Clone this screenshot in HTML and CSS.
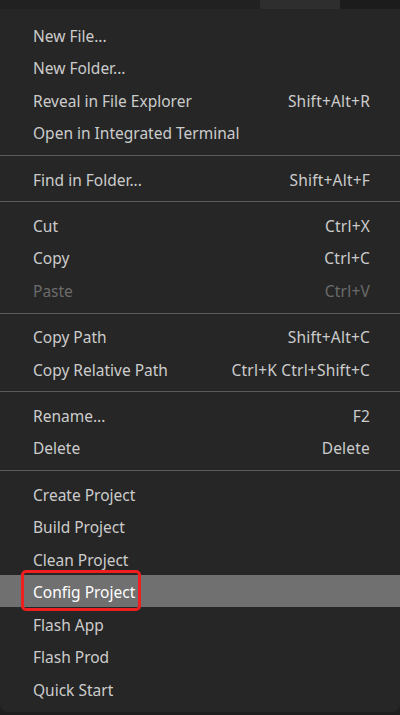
FILE: index.html
```html
<!DOCTYPE html>
<html>
<head>
<meta charset="utf-8">
<link rel="stylesheet" href="styles.css">
</head>
<body>
<div class="topbar">
  <div class="seg seg-left"></div>
  <div class="seg seg-mid"></div>
  <div class="seg seg-right"></div>
</div>
<div class="menu">
  <div class="item"><span class="label">New File...</span></div>
  <div class="item"><span class="label">New Folder...</span></div>
  <div class="item"><span class="label">Reveal in File Explorer</span><span class="key">Shift+Alt+R</span></div>
  <div class="item"><span class="label">Open in Integrated Terminal</span></div>
  <div class="sep"></div>
  <div class="item"><span class="label">Find in Folder...</span><span class="key">Shift+Alt+F</span></div>
  <div class="sep"></div>
  <div class="item"><span class="label">Cut</span><span class="key">Ctrl+X</span></div>
  <div class="item"><span class="label">Copy</span><span class="key">Ctrl+C</span></div>
  <div class="item disabled"><span class="label">Paste</span><span class="key">Ctrl+V</span></div>
  <div class="sep"></div>
  <div class="item"><span class="label">Copy Path</span><span class="key">Shift+Alt+C</span></div>
  <div class="item"><span class="label">Copy Relative Path</span><span class="key">Ctrl+K Ctrl+Shift+C</span></div>
  <div class="sep"></div>
  <div class="item"><span class="label">Rename...</span><span class="key">F2</span></div>
  <div class="item"><span class="label">Delete</span><span class="key">Delete</span></div>
  <div class="sep"></div>
  <div class="item"><span class="label">Create Project</span></div>
  <div class="item"><span class="label">Build Project</span></div>
  <div class="item"><span class="label">Clean Project</span></div>
  <div class="item active"><span class="label">Config Project</span><span class="mark"></span></div>
  <div class="item"><span class="label">Flash App</span></div>
  <div class="item"><span class="label">Flash Prod</span></div>
  <div class="item"><span class="label">Quick Start</span></div>
</div>
</body>
</html>
```

FILE: styles.css
```css
html, body {
  margin: 0;
  padding: 0;
  background: #1e1e1e;
  height: 715px;
  overflow: hidden;
}

body {
  font-family: "Noto Sans", "Open Sans", sans-serif;
  font-size: 15.5px;
  color: #cccccc;
}

.topbar {
  display: flex;
  height: 9px;
}

.seg-left {
  width: 260px;
  background: #212121;
}

.seg-mid {
  width: 80px;
  background: #2e2e2e;
}

.seg-right {
  flex: 1;
  background: #1c1c1c;
}

.menu {
  background: #262626;
  padding: 9.5px 0 7px;
  border-radius: 0 0 8px 8px;
}

.item {
  position: relative;
  display: flex;
  align-items: center;
  justify-content: space-between;
  box-sizing: border-box;
  height: 32.5px;
  padding: 2px 30px 0 33px;
  white-space: nowrap;
}

.key {
  letter-spacing: 0.2px;
}

.disabled {
  color: #6b6b6b;
}

.active {
  background: #707070;
  color: #ffffff;
}

.mark {
  position: absolute;
  left: 21px;
  top: -5px;
  width: 114px;
  height: 35px;
  border: 3px solid #f01f1f;
  border-radius: 5px;
}

.sep {
  height: 1px;
  background: #5a5a5a;
  margin: 6.5px 0 6.3px;
}
```
